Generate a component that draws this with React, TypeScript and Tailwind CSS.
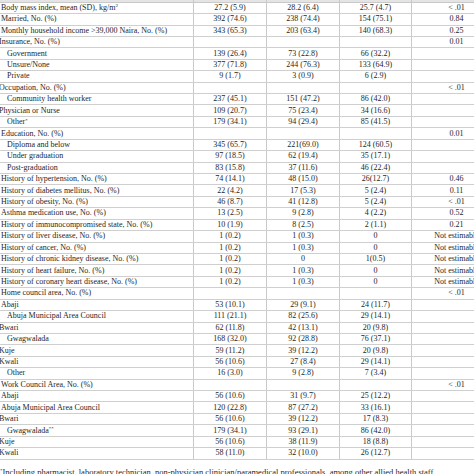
import React from "react";

type Row = {
  label: React.ReactNode;
  indent?: boolean;
  cut?: boolean;
  total?: string;
  a?: string;
  b?: string;
  p?: string;
};

const ROWS: Row[] = [
  { label: <>Body mass index, mean (SD), kg/m<sup className="text-[5px]">2</sup></>, total: "27.2 (5.9)", a: "28.2 (6.4)", b: "25.7 (4.7)", p: "< .01" },
  { label: "Married, No. (%)", total: "392 (74.6)", a: "238 (74.4)", b: "154 (75.1)", p: "0.84" },
  { label: "Monthly household income >39,000 Naira, No. (%)", total: "343 (65.3)", a: "203 (63.4)", b: "140 (68.3)", p: "0.25" },
  { label: "Insurance, No. (%)", cut: true, p: "0.01" },
  { label: "Government", indent: true, total: "139 (26.4)", a: "73 (22.8)", b: "66 (32.2)" },
  { label: "Unsure/None", indent: true, total: "377 (71.8)", a: "244 (76.3)", b: "133 (64.9)" },
  { label: "Private", indent: true, total: "9 (1.7)", a: "3 (0.9)", b: "6 (2.9)" },
  { label: "Occupation, No. (%)", cut: true, p: "< .01" },
  { label: "Community health worker", indent: true, total: "237 (45.1)", a: "151 (47.2)", b: "86 (42.0)" },
  { label: "Physician or Nurse", cut: true, total: "109 (20.7)", a: "75 (23.4)", b: "34 (16.6)" },
  { label: <>Other<sup className="text-[5px]">*</sup></>, indent: true, total: "179 (34.1)", a: "94 (29.4)", b: "85 (41.5)" },
  { label: "Education, No. (%)", p: "0.01" },
  { label: "Diploma and below", indent: true, total: "345 (65.7)", a: "221(69.0)", b: "124 (60.5)" },
  { label: "Under graduation", indent: true, total: "97 (18.5)", a: "62 (19.4)", b: "35 (17.1)" },
  { label: "Post-graduation", indent: true, total: "83 (15.8)", a: "37 (11.6)", b: "46 (22.4)" },
  { label: "History of hypertension, No. (%)", total: "74 (14.1)", a: "48 (15.0)", b: "26(12.7)", p: "0.46" },
  { label: "History of diabetes mellitus, No. (%)", total: "22 (4.2)", a: "17 (5.3)", b: "5 (2.4)", p: "0.11" },
  { label: "History of obesity, No. (%)", total: "46 (8.7)", a: "41 (12.8)", b: "5 (2.4)", p: "< .01" },
  { label: "Asthma medication use, No. (%)", total: "13 (2.5)", a: "9 (2.8)", b: "4 (2.2)", p: "0.52" },
  { label: "History of immunocompromised state, No. (%)", total: "10 (1.9)", a: "8 (2.5)", b: "2 (1.1)", p: "0.21" },
  { label: "History of liver disease, No. (%)", total: "1 (0.2)", a: "1 (0.3)", b: "0", p: "Not estimable" },
  { label: "History of cancer, No. (%)", total: "1 (0.2)", a: "1 (0.3)", b: "0", p: "Not estimable" },
  { label: "History of chronic kidney disease, No. (%)", total: "1 (0.2)", a: "0", b: "1(0.5)", p: "Not estimable" },
  { label: "History of heart failure, No. (%)", total: "1 (0.2)", a: "1 (0.3)", b: "0", p: "Not estimable" },
  { label: "History of coronary heart disease, No. (%)", total: "1 (0.2)", a: "1 (0.3)", b: "0", p: "Not estimable" },
  { label: "Home council area, No. (%)", p: "< .01" },
  { label: "Abaji", total: "53 (10.1)", a: "29 (9.1)", b: "24 (11.7)" },
  { label: "Abuja Municipal Area Council", indent: true, total: "111 (21.1)", a: "82 (25.6)", b: "29 (14.1)" },
  { label: "Bwari", cut: true, total: "62 (11.8)", a: "42 (13.1)", b: "20 (9.8)" },
  { label: "Gwagwalada", indent: true, total: "168 (32.0)", a: "92 (28.8)", b: "76 (37.1)" },
  { label: "Kuje", cut: true, total: "59 (11.2)", a: "39 (12.2)", b: "20 (9.8)" },
  { label: "Kwali", cut: true, total: "56 (10.6)", a: "27 (8.4)", b: "29 (14.1)" },
  { label: "Other", indent: true, total: "16 (3.0)", a: "9 (2.8)", b: "7 (3.4)" },
  { label: "Work Council Area, No. (%)", p: "< .01" },
  { label: "Abaji", total: "56 (10.6)", a: "31 (9.7)", b: "25 (12.2)" },
  { label: "Abuja Municipal Area Council", total: "120 (22.8)", a: "87 (27.2)", b: "33 (16.1)" },
  { label: "Bwari", cut: true, total: "56 (10.6)", a: "39 (12.2)", b: "17 (8.3)" },
  { label: <>Gwagwalada<sup className="text-[5px]">**</sup></>, indent: true, total: "179 (34.1)", a: "93 (29.1)", b: "86 (42.0)" },
  { label: "Kuje", cut: true, total: "56 (10.6)", a: "38 (11.9)", b: "18 (8.8)" },
  { label: "Kwali", cut: true, total: "58 (11.0)", a: "32 (10.0)", b: "26 (12.7)" },
];

const GRID = "grid grid-cols-[193px_73px_73px_72px_90px]";
const CELL = "border-l border-[#c9c9c9] flex items-center justify-center whitespace-nowrap";

export default function App() {
  return (
    <div className="w-[474px] h-[474px] overflow-hidden bg-white text-[#262626] text-[8px] leading-none font-['Liberation_Serif',serif]">
      <div className={`${GRID} h-[2.7px] bg-[#e4e4e4] border-b border-[#c9c9c9]`}>
        <div />
        <div className="border-l border-[#c9c9c9]" />
        <div className="border-l border-[#c9c9c9]" />
        <div className="border-l border-[#c9c9c9]" />
        <div className="border-l border-[#c9c9c9]" />
      </div>
      {ROWS.map((r, i) => (
        <div key={i} className={`${GRID} h-[11.43px] border-b border-[#cfcfcf]`}>
          <div
            className={`flex items-center whitespace-nowrap ${r.indent ? "pl-[7px]" : r.cut ? "-ml-[1px]" : "pl-[1px]"}`}
          >
            <span>{r.label}</span>
          </div>
          <div className={CELL}>{r.total}</div>
          <div className={CELL}>{r.a}</div>
          <div className={CELL}>{r.b}</div>
          <div className={CELL}>{r.p}</div>
        </div>
      ))}
      <p className="pt-[8px] text-[8.5px] whitespace-nowrap">
        <sup className="text-[5px]">*</sup>Including pharmacist, laboratory technician, non-physician clinician/paramedical professionals, among other allied health staff
      </p>
    </div>
  );
}
